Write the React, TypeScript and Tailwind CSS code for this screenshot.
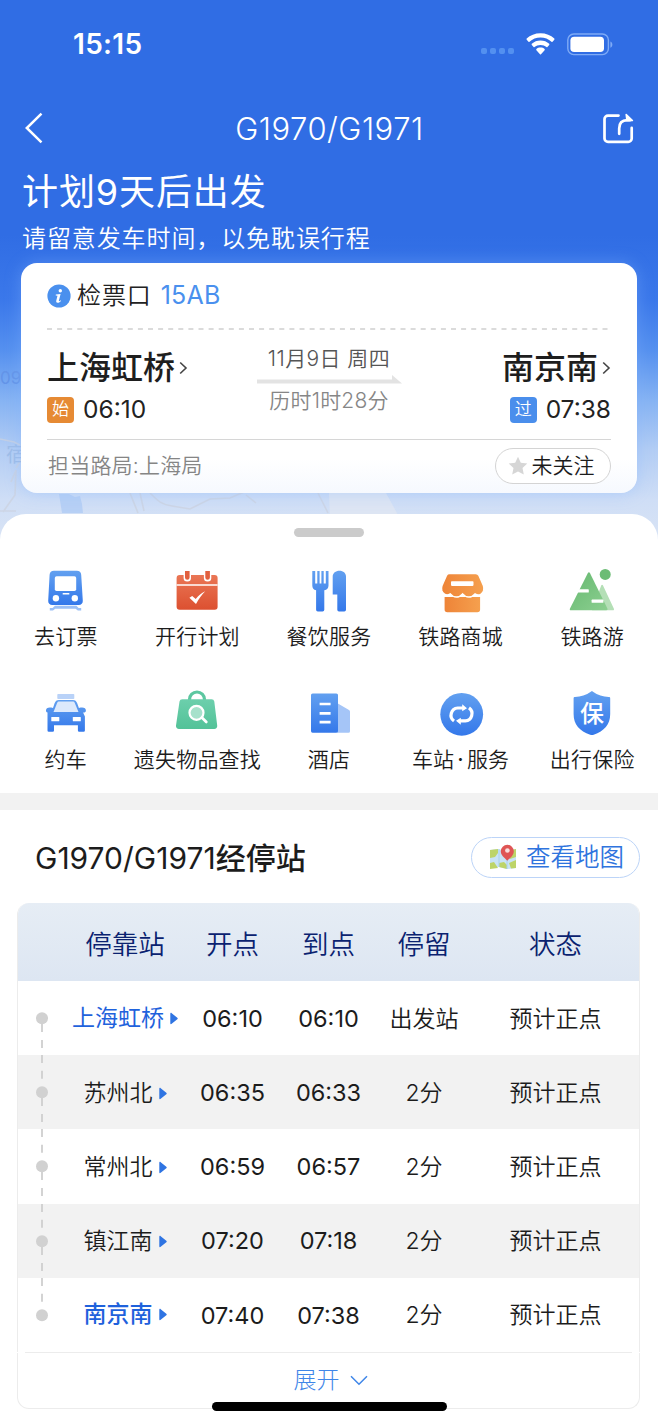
import type { ReactNode } from "react";

interface Service {
  id: string;
  label: ReactNode;
  icon: ReactNode;
}

interface Stop {
  name: string;
  depart: string;
  arrive: string;
  stay: string;
  status: string;
  /** Boarding / alighting stations are drawn in blue. */
  highlight?: boolean;
}

const services: Service[] = [
  {
    id: "tickets",
    label: "去订票",
    icon: (
      <svg width="48" height="48" viewBox="0 0 48 48" fill="none">
        <path d="M13 38.8h21.4l2.2 2.2h2.6v2.6h-3.4l-2.2-1.8H13.2L11 43.6H7.8V41h2.8z" fill="#9cc0f6" />
        <path d="M12 3.7h22.8a4.4 4.4 0 0 1 4.4 4l1.6 26a4 4 0 0 1-4 4.3H10.2a4 4 0 0 1-4-4.3L7.600 7.700a4.4 4.4 0 0 1 4.4-4z" fill="url(#blue)" />
        <rect x="12.800" y="9.2" width="21.400" height="14.8" rx="1.8" fill="#fff" />
        <rect x="20.6" y="25.9" width="6.8" height="1.6" rx=".6" fill="#fff" />
        <circle cx="13.900" cy="31.3" r="3.2" fill="#fff" />
        <circle cx="32.800" cy="31.3" r="3.2" fill="#fff" />
      </svg>
    ),
  },
  {
    id: "schedule",
    label: "开行计划",
    icon: (
      <svg width="48" height="48" viewBox="0 0 48 48" fill="none">
        <rect x="3.6" y="8" width="41" height="34.8" rx="3" fill="url(#red)" />
        <path d="M3.6 18h41" stroke="#fff" strokeWidth="1.3" />
        <rect x="10.6" y="3" width="7.4" height="11.6" rx="3.6" fill="#fff" />
        <rect x="30.9" y="3" width="7.4" height="11.6" rx="3.6" fill="#fff" />
        <path d="M12 4h4.6v6.4a2.3 2.3 0 0 1-4.6 0zM32.3 4h4.6v6.4a2.3 2.3 0 0 1-4.6 0z" fill="#e2603f" />
        <path d="M16.400 30.800l2.800-1.800 3.500 3c3-3.600 5.500-5.700 9.500-7.700-3.500 3.600-6.300 7.300-9.200 12.700z" fill="#fff" />
      </svg>
    ),
  },
  {
    id: "dining",
    label: "餐饮服务",
    icon: (
      <svg width="48" height="48" viewBox="0 0 48 48" fill="none">
        <path d="M7.300 4h2.900v12.500h2.100V4h2.300v12.500h1.800V4h2.300v12.500h2.100V4h2.700v14.500c0 2.600-1.500 4.200-4.200 4.800v19.500a1.700 1.700 0 0 1-1.700 1.700h-4.800a1.700 1.700 0 0 1-1.700-1.700V23.300c-2.500-.6-3.800-2.200-3.800-4.800z" fill="url(#blue)" />
        <path d="M27.700 27.400V9.500c0-3.600 3-5.800 6.800-5.800 3.700 0 6.500 2.200 6.500 5.800v33.300a1.700 1.700 0 0 1-1.700 1.700H34a1.700 1.700 0 0 1-1.700-1.700V27.400z" fill="url(#blue)" />
      </svg>
    ),
  },
  {
    id: "mall",
    label: "铁路商城",
    icon: (
      <svg width="48" height="48" viewBox="0 0 48 48" fill="none">
        <path d="M7.600 30h35.500v12.600a2.700 2.700 0 0 1-2.700 2.700H10.300a2.700 2.700 0 0 1-2.700-2.700z" fill="url(#orange)" />
        <path d="M12.500 6.600h26.300c1.500 0 2.500.6 3.200 1.900l4.500 10.300c.5 1.400.5 3 .2 4.700-.8 3.600-4.900 6.200-8.700 3.400-3.600 4.200-9 4.200-12.400 0-3.600 4.200-9 4.200-12.300 0-3.800 2.600-7.800.2-8.600-3.400-.3-1.700-.3-3.300.2-4.700L9.400 8.500c.6-1.300 1.600-1.900 3.100-1.900z" fill="url(#orange)" stroke="#fff" strokeWidth="1.500" />
        <rect x="14" y="14.300" width="22.500" height="4.600" rx=".8" fill="#fff" />
      </svg>
    ),
  },
  {
    id: "travel",
    label: "铁路游",
    icon: (
      <svg width="48" height="48" viewBox="0 0 48 48" fill="none">
        <path d="M33.300 18.300c.4-.9 1.200-.9 1.600 0l11 23.500c.3.800 0 1.500-.8 1.500H24z" fill="#b4dfb6" />
        <path d="M20 5.800c.5-.9 1.300-.9 1.800 0l17.600 35.800c.4.900 0 1.700-1 1.700H2.800c-.9 0-1.300-.7-.9-1.600z" fill="url(#green)" />
        <circle cx="37.200" cy="7.400" r="5.500" fill="#6cbc75" />
        <rect x="9" y="22.300" width="11.800" height="3.200" rx=".6" fill="#fff" />
        <rect x="23.600" y="32.600" width="11.800" height="3.200" rx=".6" fill="#fff" />
      </svg>
    ),
  },
  {
    id: "taxi",
    label: "约车",
    icon: (
      <svg width="48" height="48" viewBox="0 0 48 48" fill="none">
        <rect x="15.300" y="4" width="17" height="5" rx=".8" fill="#b9d2f8" />
        <path d="M12.600 13.300c.8-2.300 2-3.400 4.300-3.400h14c2.300 0 3.500 1.100 4.300 3.400l1.700 4.700c4.600-1.200 7 .1 7 2.400 0 1.400-.9 2-2.200 2h-.6l1.800 4v14.100a1.300 1.300 0 0 1-1.300 1.300h-4.400a1.300 1.300 0 0 1-1.300-1.300v-5.200H12v5.200a1.300 1.300 0 0 1-1.300 1.300H6.800a1.300 1.300 0 0 1-1.300-1.300V22.400c-1 0-1.500-.8-1.500-2 0-2.300 2.400-3.600 7-2.400z" fill="url(#blue)" />
        <path d="M15.200 12.800c.4-.9 1-1.300 2-1.300h13.500c1 0 1.600.4 2 1.300l3.800 9.200h-25z" fill="#dce9fc" />
        <rect x="9.300" y="26.900" width="8" height="4.400" rx=".6" fill="#fff" />
        <rect x="30.800" y="26.900" width="8" height="4.400" rx=".6" fill="#fff" />
      </svg>
    ),
  },
  {
    id: "lost",
    label: "遗失物品查找",
    icon: (
      <svg width="48" height="48" viewBox="0 0 48 48" fill="none">
        <path d="M16.500 11.500V9.500a7.500 7.500 0 0 1 15 0v2" stroke="#5cc7a0" strokeWidth="3.200" />
        <path d="M9.300 9.300h29.200a2.800 2.800 0 0 1 2.800 2.300l2.900 24a3 3 0 0 1-3 3.500H6a3 3 0 0 1-3-3.500l3.500-24a2.800 2.800 0 0 1 2.800-2.300z" fill="url(#mint)" />
        <circle cx="23.500" cy="22.800" r="7" fill="#a6e1cb" stroke="#fff" strokeWidth="2.200" />
        <path d="M28.800 27.600l4.500 4.300" stroke="#fff" strokeWidth="2.800" strokeLinecap="round" />
      </svg>
    ),
  },
  {
    id: "hotel",
    label: "酒店",
    icon: (
      <svg width="48" height="48" viewBox="0 0 48 48" fill="none">
        <path d="M32 13l12 7c.7.400 1 1 1 1.800v19.400a1.500 1.500 0 0 1-1.500 1.500H32z" fill="#a5c5f7" />
        <rect x="6" y="3.400" width="27" height="39.300" rx="1.600" fill="url(#blue)" />
        <path d="M14.600 14h11M14.600 23.300h11M14.600 32.200h11" stroke="#fff" strokeWidth="2.700" />
      </svg>
    ),
  },
  {
    id: "station",
    label: (
      <>
        车站<span className="mx-[3px] font-medium">·</span>服务
      </>
    ),
    icon: (
      <svg width="48" height="48" viewBox="0 0 48 48" fill="none">
        <circle cx="24.700" cy="24.300" r="21.400" fill="url(#blue)" />
        <g stroke="#fff" strokeWidth="3.200">
          <path d="M17 31a7.200 7.200 0 0 1 3.700-13H26" />
          <path d="M32 17.900a7.200 7.200 0 0 1-3.700 13H23" />
        </g>
        <path d="M25.200 14.200l4.800 4-4.800 3zM23.800 34.700l-4.800-4 4.800-3z" fill="#fff" />
      </svg>
    ),
  },
  {
    id: "insurance",
    label: "出行保险",
    icon: (
      <svg width="48" height="48" viewBox="0 0 48 48" fill="none">
        <path d="M22.800 1.700c.7-.6 1.500-.6 2.200 0 4.600 3.600 10 5 15.800 5.200.9 0 1.400.5 1.400 1.400V24c0 10.500-6 17-16.500 20.800-1.200.4-2.300.4-3.500 0C11.600 41 5.600 34.500 5.600 24V8.300c0-.9.500-1.400 1.400-1.400 5.800-.2 11.200-1.600 15.800-5.200z" fill="url(#blue)" />
        <text x="24" y="32" fontSize="24" fontWeight="500" fill="#fff" textAnchor="middle">保</text>
      </svg>
    ),
  },
];

const stops: Stop[] = [
  { name: "上海虹桥", depart: "06:10", arrive: "06:10", stay: "出发站", status: "预计正点", highlight: true },
  { name: "苏州北", depart: "06:35", arrive: "06:33", stay: "2分", status: "预计正点" },
  { name: "常州北", depart: "06:59", arrive: "06:57", stay: "2分", status: "预计正点" },
  { name: "镇江南", depart: "07:20", arrive: "07:18", stay: "2分", status: "预计正点" },
  { name: "南京南", depart: "07:40", arrive: "07:38", stay: "2分", status: "预计正点", highlight: true },
];

const columns = "grid grid-cols-[48px_118px_97px_95px_96px_1fr] items-center";

/** Gradients shared by all the service icons. */
function IconDefs() {
  return (
    <svg width="0" height="0" className="absolute">
      <defs>
        <linearGradient id="blue" x1="0" y1="0" x2="0" y2="1">
          <stop offset="0" stopColor="#62a0f0" />
          <stop offset="1" stopColor="#3478ea" />
        </linearGradient>
        <linearGradient id="red" x1="0" y1="0" x2="0" y2="1">
          <stop offset="0" stopColor="#ea7655" />
          <stop offset="1" stopColor="#dc5030" />
        </linearGradient>
        <linearGradient id="orange" x1="0" y1="0" x2="1" y2="0">
          <stop offset="0" stopColor="#ee8438" />
          <stop offset="1" stopColor="#f5a04e" />
        </linearGradient>
        <linearGradient id="green" x1="0" y1="0" x2="1" y2="1">
          <stop offset="0" stopColor="#66b870" />
          <stop offset="1" stopColor="#8ccf90" />
        </linearGradient>
        <linearGradient id="mint" x1="0" y1="0" x2="0" y2="1">
          <stop offset="0" stopColor="#6ccfac" />
          <stop offset="1" stopColor="#53c298" />
        </linearGradient>
      </defs>
    </svg>
  );
}

function StatusBar() {
  return (
    <div className="flex h-22 items-center justify-between pl-[73px] pr-[45px] text-white">
      <span className="text-[28px] font-semibold leading-none tracking-[0.3px]">15:15</span>
      <div className="flex items-center">
        <div className="mt-3.5 mr-3 flex gap-[3px]">
          {[0, 1, 2, 3].map((dot) => (
            <span key={dot} className="h-1.5 w-1.5 rounded-[2px] bg-[#5390f0]" />
          ))}
        </div>
        <svg width="29" height="22" viewBox="0 0 29 22" fill="#fff" className="mr-3">
          <path d="M14.500 .300C9 .300 4.200 2.300.700 5.600c-.3.300-.3.700 0 1.200l1.800 1.900c.3.300.7.300 1 0 3-2.600 6.800-4.200 11-4.200s8 1.600 11 4.200c.3.300.7.300 1 0l1.800-1.900c.3-.5.3-.9 0-1.200C24.800 2.300 20 .3 14.500.3z" />
          <path d="M14.500 7.500c-3.400 0-6.400 1.200-8.700 3.300-.3.300-.3.800 0 1.200l1.800 2.100c.3.300.6.300.9 0 1.600-1.400 3.700-2.200 6-2.200s4.400.8 6 2.200c.3.300.6.300.9 0l1.800-2.100c.3-.4.3-.9 0-1.200-2.300-2.100-5.300-3.300-8.700-3.300z" />
          <path d="M14.500 14.600c-1.600 0-3 .5-4.100 1.400-.3.300-.3.900 0 1.300l3.600 4c.3.300.7.300 1 0l3.600-4c.3-.4.3-1 0-1.300-1.100-.9-2.500-1.400-4.100-1.400z" />
        </svg>
        <svg width="46" height="23" viewBox="0 0 46 23" fill="none">
          <rect x=".8" y="1" width="40.600" height="20.600" rx="6" stroke="#7fabf6" strokeWidth="1.400" />
          <rect x="3.400" y="3.800" width="33.600" height="15.200" rx="3.800" fill="#fff" />
          <path d="M43.400 8.500c2.600 1.200 2.600 5 0 6.200z" fill="#7fabf6" />
        </svg>
      </div>
    </div>
  );
}

function NavBar() {
  return (
    <div className="flex h-20 items-center justify-between pl-[25px] pr-[24px] text-white">
      <svg width="31" height="32" viewBox="0 0 31 32" fill="none" stroke="currentColor" strokeWidth="2.500">
        <path d="M16.500 1.600L1.800 16l14.700 14.400" />
      </svg>
      <h1 className="text-[31px] font-light leading-none tracking-[0.500px]">G1970/G1971</h1>
      <svg width="31" height="32" viewBox="0 0 31 32" fill="none" stroke="currentColor" strokeWidth="2.700" strokeLinecap="round" strokeLinejoin="round">
        <path d="M15.500 3.600H5a3.500 3.500 0 0 0-3.500 3.500v19.300A3.500 3.500 0 0 0 5 29.900h20.200a3.500 3.500 0 0 0 3.500-3.500V15.900" />
        <path d="M16.200 21.800v-5.300c0-5.600 2.500-8.400 8-8.400h3" />
        <path d="M23.200 2.500l6.200 6-5.400.3z" fill="currentColor" strokeWidth="1.600" />
      </svg>
    </div>
  );
}

/** Faded map that shows through under the blue header. */
function MapBackdrop() {
  return (
    <svg className="absolute left-0 top-0" width="658" height="560" viewBox="0 0 658 560" fill="none">
      <g stroke="#ccd2df" strokeWidth="1.600" opacity=".7">
        <path d="M0 439l14 3 6 3M16 470l-1 25-12 17M16 470l-5 12M16 468l5-8M0 511h16" />
        <path d="M130 493l8 20M140 493l4 18M150 493c8 8 12 12 22 13l18 3 20-10 20-1 14-6M246 495l10 8M318 493l10 20" />
      </g>
      <path d="M59 494h10l6 3 5-1 2 8 1 9H62z" fill="#b7d0f5" />
      <path d="M329 493h57l12 22h-68z" fill="#dde5f3" />
      <text x="0" y="384" fontSize="17" fill="#6394e8">09</text>
      <text x="6" y="462" fontSize="20" fill="#9fbde8">宿</text>
    </svg>
  );
}

function Chevron() {
  return (
    <svg width="9" height="14" viewBox="0 0 9 14" fill="none" stroke="#444" strokeWidth="1.600">
      <path d="M1.200 1.500L7 7l-5.800 5.500" />
    </svg>
  );
}

function TripCard() {
  return (
    <section className="relative mx-[21px] h-[230px] rounded-2xl bg-linear-to-b from-white from-85% to-[#f6f9fe] px-[26px] shadow-[0_0_16px_rgba(130,180,255,0.4)]">
      <div className="flex h-[65px] items-center">
        <svg width="24" height="24" viewBox="0 0 24 24">
          <circle cx="12" cy="12" r="11.600" fill="#4a90ee" />
          <circle cx="13.300" cy="6.800" r="1.700" fill="#fff" />
          <path d="M8.800 10.600l4.800-.7-1.700 6.600c-.2.900.2 1 1.600-.2l.5.600c-2.600 2.600-5.400 2.400-4.700-.4l1.200-4.700-1.800-.3z" fill="#fff" />
        </svg>
        <span className="ml-1.5 text-2xl font-[350] leading-none tracking-[0.900px] text-[#222]">检票口</span>
        <span className="ml-[9px] text-[25px] leading-none tracking-[0.2px] text-[#4a90ee]">15AB</span>
      </div>
      <svg width="564" height="2" viewBox="0 0 564 2" className="block">
        <path d="M0 1h564" stroke="#cfcfcf" strokeWidth="1.600" strokeDasharray="5 5.100" />
      </svg>

      <div className="grid h-[109px] grid-cols-[1fr_auto_1fr]">
        <div className="pt-5">
          <div className="flex items-center gap-1">
            <span className="text-[32px] font-medium leading-9 text-[#1e1e1e]">上海虹桥</span>
            <Chevron />
          </div>
          <div className="mt-2.5 flex items-center gap-[9px]">
            <span className="flex h-[26px] w-[27px] items-center justify-center rounded bg-[#e68a34] text-[17px] font-[350] leading-none text-white">始</span>
            <span className="text-[24.500px] leading-[27px] text-[#222]">06:10</span>
          </div>
        </div>
        <div className="flex flex-col items-center pt-[17px] font-[350] text-[21px]">
          <span className="leading-6 tracking-[0.4px] text-[#555]">11月9日 周四</span>
          <svg width="145" height="9" viewBox="0 0 145 9" className="my-1">
            <path d="M0 4.500h135V0l10 8.500H0z" fill="#e3e3e3" />
          </svg>
          <span className="leading-[26px] tracking-[0.2px] text-[#868686]">历时1时28分</span>
        </div>
        <div className="flex flex-col items-end pt-5">
          <div className="flex items-center gap-1">
            <span className="text-[32px] font-medium leading-9 text-[#1e1e1e]">南京南</span>
            <Chevron />
          </div>
          <div className="mt-2.5 flex items-center gap-[9px]">
            <span className="flex h-[26px] w-[27px] items-center justify-center rounded bg-[#4a8eec] text-[17px] font-[350] leading-none text-white">过</span>
            <span className="text-[24.500px] leading-[27px] text-[#222]">07:38</span>
          </div>
        </div>
      </div>

      <div className="flex h-[54px] items-center justify-between border-t border-[#d6d6d6]">
        <span className="mb-[3px] ml-px text-[21px] font-[350] leading-none tracking-[0.2px] text-[#858585]">担当路局:上海局</span>
        <button className="mb-0.5 flex h-9 w-[116px] items-center justify-center gap-1 rounded-full border border-[#d4d4d4] bg-white pr-1 text-[21px] font-[350] leading-none text-[#1c1c1c]">
          <svg width="20" height="20" viewBox="0 0 20 20" fill="#d6d6d6">
            <path d="M10 .800l2.800 6 6.500.8-4.800 4.500 1.300 6.500L10 15.400l-5.800 3.200 1.300-6.500L.700 7.600l6.500-.8z" />
          </svg>
          未关注
        </button>
      </div>
    </section>
  );
}

function MapIcon() {
  return (
    <svg width="28" height="28" viewBox="0 0 28 28" fill="none">
      <path d="M1 6l8-1 9 2 9-2v19l-9 1-8-2-9 1z" fill="#c9e3f6" />
      <path d="M1 6l8-1v4l-3 4-5 1zM1 19l4-1 4 6-8 1zM10 19l5-1 3 3v4l-8-2zM22 6l5-1v8l-6 2zM20 19l7-3v8l-5 .5z" fill="#bdd468" />
      <path d="M10 5v18M18 15v10" stroke="#a9d0ee" />
      <path d="M18.300 .800a6.500 6.500 0 0 1 6.500 6.500c0 4-3.200 6-6.500 9.500-3.300-3.500-6.500-5.500-6.500-9.500A6.500 6.500 0 0 1 18.300.8z" fill="#df5555" />
      <circle cx="18.400" cy="6.500" r="2.300" fill="#f9dede" />
    </svg>
  );
}

function StopRow({ stop, index }: { stop: Stop; index: number }) {
  const isFirst = index === 0;
  const isLast = index === stops.length - 1;
  return (
    <div className={`${columns} h-[74.200px] text-center text-[23px] font-[350] leading-none text-[#1c1c1c] ${index % 2 ? "bg-[#f2f2f2]" : "bg-white"}`}>
      <svg width="48" height="74.200" viewBox="0 0 48 74.200">
        {!isFirst && <path d="M24 0v31" stroke="#cfcfcf" strokeWidth="1.800" strokeDasharray="8 7.700" />}
        {!isLast && <path d="M24 43v31.200" stroke="#cfcfcf" strokeWidth="1.800" strokeDasharray="8 8" />}
        <circle cx="24" cy="37.200" r="6" fill="#d1d1d1" />
      </svg>
      <div className={`flex items-center justify-center gap-1.5 ${stop.highlight ? "text-[#1f62dc]" : "pt-0.5"} ${stop.highlight && !isFirst ? "font-medium" : ""} ${isFirst ? "font-normal" : ""}`}>
        {stop.name}
        <svg width="8" height="13" viewBox="0 0 8 13" fill="#2f74e2">
          <path d="M.300 1.800C.300.600 1 .500 1.700 1.200l5.600 4.500c.6.500.6 1.100 0 1.600l-5.600 4.500c-.7.700-1.400.6-1.400-.6z" />
        </svg>
      </div>
      <span className="pt-px text-[23.500px] font-normal">{stop.depart}</span>
      <span className="pt-px text-[23.500px] font-normal">{stop.arrive}</span>
      <span className="pt-0.5">{stop.stay}</span>
      <span className="pt-0.5">{stop.status}</span>
    </div>
  );
}

export default function App() {
  return (
    <div className="relative h-[1424px] w-[658px] overflow-hidden bg-white [font-family:Inter,'Noto_Sans_CJK_SC',sans-serif]">
      <IconDefs />
      <header className="relative h-[560px] bg-[linear-gradient(180deg,#306de4_0px,#306de4_235px,#3b78ea_300px,#5590ef_350px,#86b3f3_400px,#b3cdf4_450px,#cfdef6_500px,#dde6f4_560px)]">
        <MapBackdrop />
        <StatusBar />
        <NavBar />
        <div className="h-[95px] pl-[22px] text-white">
          <h2 className="pt-0.5 text-4xl font-normal leading-[44px] tracking-[0.900px]">计划9天后出发</h2>
          <p className="mt-2.5 text-2xl font-[350] leading-[30px] tracking-[0.900px]">请留意发车时间，以免耽误行程</p>
        </div>
        <TripCard />
      </header>

      <main className="relative -mt-[46px] rounded-t-[26px] bg-white">
        <div className="flex h-[45px] justify-center pt-3.5">
          <span className="h-[9px] w-[70px] rounded-full bg-[#cbcbcb]" />
        </div>
        <div className="grid grid-cols-5 pt-2">
          {services.map((service) => (
            <button key={service.id} className="flex h-[122.500px] flex-col items-center whitespace-nowrap text-[21px] font-[350] leading-[30px] tracking-[0.2px] text-[#1c1c1c]">
              {service.icon}
              <span className="mt-[7px]">{service.label}</span>
            </button>
          ))}
        </div>
        <div className="-mt-[19px] h-[17px] bg-[#f2f2f2]" />

        <section className="pl-[17px] pr-[18px]">
          <div className="flex h-[93px] items-center justify-between pl-[18px] pt-0.5">
            <h3 className="text-[30px] font-normal leading-none text-[#1c1c1c]">
              G1970/G1971<span className="font-medium">经停站</span>
            </h3>
            <button className="flex h-[41px] w-[169px] items-center justify-center gap-[9px] rounded-full border border-[#bcd4f8] pl-0.5 text-[24.500px] font-[350] leading-none text-[#2f74de]">
              <MapIcon />
              查看地图
            </button>
          </div>
          <div className="overflow-hidden rounded-t-xl border-x border-[#ececec]">
            <div className={`${columns} h-[78px] bg-linear-to-b from-[#e6edf5] to-[#dde6f2] pt-1 text-center text-[26.500px] font-[350] leading-none text-[#0a2270]`}>
              <span />
              <span>停靠站</span>
              <span>开点</span>
              <span>到点</span>
              <span>停留</span>
              <span>状态</span>
            </div>
            {stops.map((stop, index) => (
              <StopRow key={stop.name} stop={stop} index={index} />
            ))}
          </div>
          <div className="mx-2 h-px bg-[#ececec]" />
          <button className="flex h-14 w-full items-center justify-center gap-2.5 rounded-b-xl border-x border-b border-[#ececec] pl-1 text-[23px] font-light leading-none text-[#3f86e8]">
            展开
            <svg width="18" height="11" viewBox="0 0 18 11" fill="none" stroke="currentColor" strokeWidth="1.500">
              <path d="M1 1.200l8 8 8-8" />
            </svg>
          </button>
        </section>
      </main>

      {/* Home indicator */}
      <div className="absolute bottom-[13px] left-[212px] h-[9px] w-[235px] rounded-full bg-black" />
    </div>
  );
}
